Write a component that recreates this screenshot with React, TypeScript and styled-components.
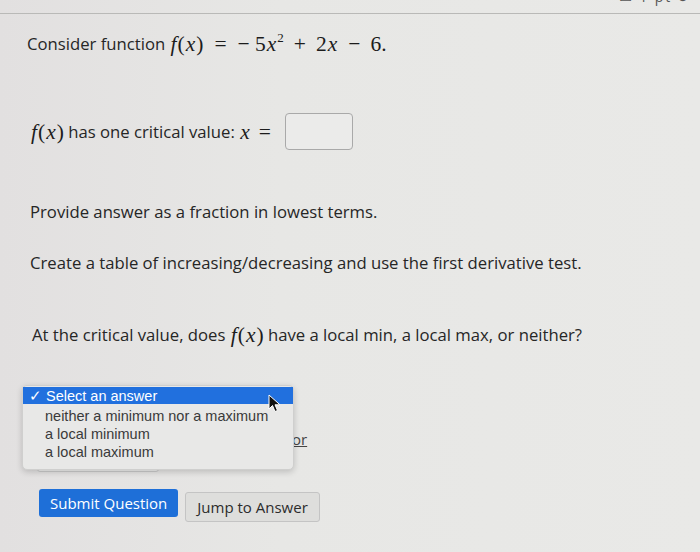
import * as React from "react";
import styled, { createGlobalStyle } from "styled-components";

const GlobalStyle = createGlobalStyle`
  html, body {
    margin: 0;
    padding: 0;
    background: #e4e4e2;
  }
`;

const Page = styled.div`
  position: relative;
  width: 700px;
  height: 552px;
  overflow: hidden;
  background: linear-gradient(90deg, #e2e0e0 0%, #e7e7e5 40%, #e9e9e7 100%);
  font-family: "Open Sans", "Noto Sans", sans-serif;
  color: #262626;
`;

const TopBar = styled.div`
  height: 13px;
  border-bottom: 1px solid #b9b9b7;
  display: flex;
  justify-content: flex-end;
  overflow: hidden;
`;

const TopText = styled.span`
  font-size: 14px;
  line-height: 14px;
  margin-top: -10px;
  padding-right: 8px;
  color: #555;
  letter-spacing: 2px;
`;

const Content = styled.div`
  padding: 0 0 0 27px;
`;

const Para = styled.p<{ $top: number; $indent?: number }>`
  margin: ${({ $top }) => $top}px 0 0 ${({ $indent }) => $indent ?? 0}px;
  font-size: 16.7px;
  line-height: 22px;
  display: flex;
  align-items: center;
  white-space: nowrap;
`;

const M = styled.span`
  font-family: "Liberation Serif", "DejaVu Serif", serif;
  font-size: 21.5px;
  color: #1c1c1c;
`;

const I = styled.i`
  font-family: "Liberation Serif", serif;
  padding: 0 1px;
`;

const Op = styled.span<{ $gap?: number }>`
  margin: 0 ${({ $gap }) => $gap ?? 10}px;
`;

const Sup = styled.sup`
  font-size: 13px;
  vertical-align: 9px;
  line-height: 0;
`;

const AnswerBox = styled.span`
  display: inline-block;
  width: 66px;
  height: 35px;
  margin-left: 6px;
  border: 1px solid #a9a9a9;
  border-radius: 4px;
  background: #ebebea;
`;

const SelectArea = styled.div`
  position: relative;
  margin: 39px 0 0 10px;
  height: 87px;
`;

const SelectRow = styled.div`
  display: flex;
  align-items: flex-end;
  height: 100%;
`;

const SelectBox = styled.div`
  width: 120px;
  height: 22px;
  border: 1px solid #c9c9c9;
  border-radius: 3px;
  background: #eeeeed;
`;

const OrLink = styled.span`
  font-size: 15px;
  line-height: 16px;
  color: #444;
  text-decoration: underline;
  margin-left: 133px;
  margin-bottom: 25px;
  font-family: "Open Sans", sans-serif;
`;

const Menu = styled.div`
  position: absolute;
  left: -15px;
  top: 0;
  width: 270px;
  padding: 1px 0 8px;
  background: #e8e8e7;
  border: 1px solid #cfcfce;
  border-radius: 5px;
  box-shadow: 0 2px 6px rgba(0, 0, 0, 0.18);
  font-family: "Liberation Sans", Arial, sans-serif;
  font-size: 14.5px;
`;

const Option = styled.div<{ $active?: boolean }>`
  height: ${({ $active }) => ($active ? 17 : 18)}px;
  line-height: 18px;
  margin-bottom: ${({ $active }) => ($active ? 3 : 0)}px;
  padding-left: ${({ $active }) => ($active ? 6 : 22)}px;
  background: ${({ $active }) => ($active ? "#2170de" : "transparent")};
  color: ${({ $active }) => ($active ? "#ffffff" : "#3a3a3a")};
  display: flex;
  align-items: center;
  gap: 4px;
`;

const Cursor = styled.svg`
  position: absolute;
  left: 231px;
  top: 9px;
`;

const ButtonRow = styled.div`
  display: flex;
  align-items: flex-start;
  gap: 7px;
  margin: 17px 0 0 12px;
`;

const PrimaryButton = styled.button`
  height: 28px;
  padding: 0 11px;
  border: none;
  border-radius: 3px;
  background: #1e6fd8;
  color: #ffffff;
  font-family: "Open Sans", sans-serif;
  font-size: 15px;
`;

const SecondaryButton = styled.button`
  height: 30px;
  margin-top: 3px;
  padding: 0 11px;
  border: 1px solid #c4c4c4;
  border-radius: 3px;
  background: #dededc;
  color: #2c2c2c;
  font-family: "Open Sans", sans-serif;
  font-size: 15px;
`;

export default function App() {
  return (
    <Page>
      <GlobalStyle />
      <TopBar>
        <TopText>▭ 1 pt ⟳</TopText>
      </TopBar>
      <Content>
        <Para $top={19}>
          Consider function&nbsp;
          <M>
            <I>f</I>(<I>x</I>)<Op $gap={11}>=</Op>−&nbsp;5<I>x</I>
            <Sup>2</Sup>
            <Op>+</Op>2<I>x</I>
            <Op>−</Op>6.
          </M>
        </Para>
        <Para $top={58} $indent={3}>
          <M>
            <I>f</I>(<I>x</I>)
          </M>
          &nbsp;has one critical value:&nbsp;
          <M>
            <I>x</I>
            <Op $gap={8}>=</Op>
          </M>
          <AnswerBox />
        </Para>
        <Para $top={51} $indent={3}>
          Provide answer as a fraction in lowest terms.
        </Para>
        <Para $top={29} $indent={3}>
          Create a table of increasing/decreasing and use the first derivative test.
        </Para>
        <Para $top={50} $indent={5}>
          At the critical value, does&nbsp;
          <M>
            <I>f</I>(<I>x</I>)
          </M>
          &nbsp;have a local min, a local max, or neither?
        </Para>
        <SelectArea>
          <SelectRow>
            <SelectBox />
            <OrLink>or</OrLink>
          </SelectRow>
          <Menu>
            <Option $active>
              <span>✓</span>Select an answer
            </Option>
            <Option>neither a minimum nor a maximum</Option>
            <Option>a local minimum</Option>
            <Option>a local maximum</Option>
          </Menu>
          <Cursor width="14" height="20" viewBox="0 0 14 20">
            <path
              d="M1 1 L1 15 L4.5 11.5 L7 17.5 L9.5 16.5 L7 10.8 L12 10.8 Z"
              fill="#111"
              stroke="#fff"
              strokeWidth="1"
            />
          </Cursor>
        </SelectArea>
        <ButtonRow>
          <PrimaryButton>Submit Question</PrimaryButton>
          <SecondaryButton>Jump to Answer</SecondaryButton>
        </ButtonRow>
      </Content>
    </Page>
  );
}
